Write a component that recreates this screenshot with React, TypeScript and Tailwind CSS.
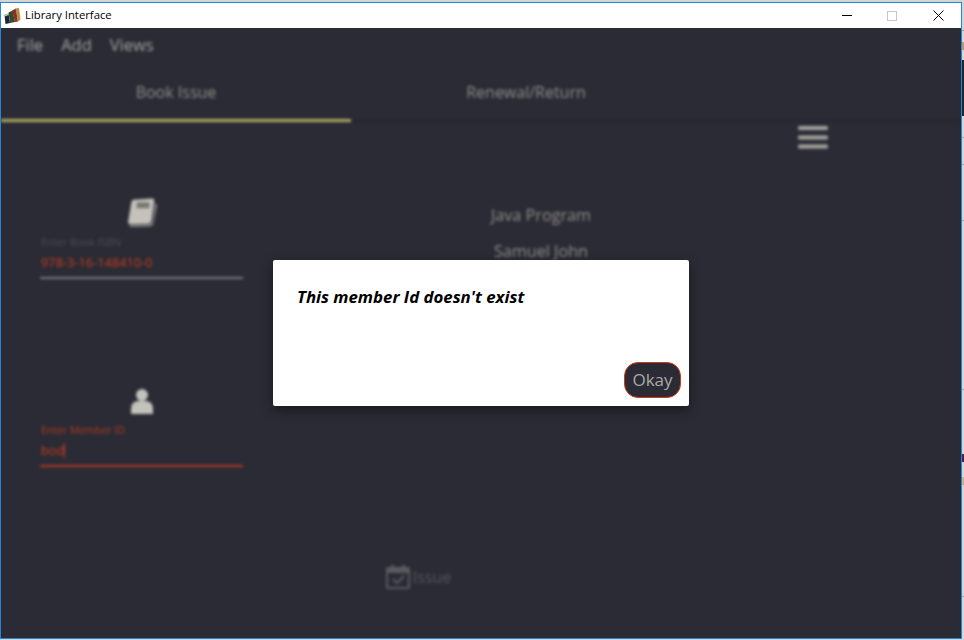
const sans = "font-['Open_Sans','Noto_Sans',sans-serif]";

function BooksLogo() {
  return (
    <svg width="17" height="18" viewBox="0 0 17 17">
      <path d="M0.500 7.500 L4.500 6 L6 15.500 L1.500 16.500 Z" fill="#1d2036" />
      <path d="M0.500 7.500 L4.500 6 L4.800 7.500 L0.800 9 Z" fill="#c9c4b0" />
      <path d="M4.500 5 L8.500 3 L11 14.500 L6 15.500 Z" fill="#2f4f2c" />
      <path d="M8 3 L12 1 L14 14 L11 14.500 Z" fill="#8e3124" />
      <path d="M11.500 1 L15 0.500 L16.500 12 L14 14 Z" fill="#b98a4a" />
    </svg>
  );
}

function BookIcon() {
  return (
    <svg width="32" height="32" viewBox="0 0 30 30">
      <path d="M7 2.500 L24 1.500 Q27 1.500 26.500 4 L24 22 Q23.500 25 21 25 L4.500 25.500 Q1.500 25.500 2 23 L5 5 Q5.300 2.600 7 2.500 Z" fill="#c4c2bb" />
      <path d="M27.500 6 L29 7 L26 24 Q25 27.500 22 27.500 L5 28 Q2.500 27.500 3 26.500 L22 26 Q25 25.500 25.500 22 Z" fill="#a5a39d" />
      <rect x="10" y="5" width="12" height="5.500" fill="#77766f" />
    </svg>
  );
}

function PersonIcon() {
  return (
    <svg width="24" height="27" viewBox="0 0 24 26">
      <circle cx="12" cy="6.500" r="6" fill="#c4c3bb" />
      <path d="M1 25.500 V20 Q1 13 8 12.500 H16 Q23 13 23 20 V25.500 Z" fill="#c4c3bb" />
    </svg>
  );
}

function HamburgerIcon() {
  return (
    <svg width="30" height="24" viewBox="0 0 30 24">
      <rect x="0" y="1" width="30" height="4" rx="1.500" fill="#a8a6a2" />
      <rect x="0" y="10.500" width="30" height="4" rx="1.500" fill="#a8a6a2" />
      <rect x="0" y="19.500" width="30" height="4" rx="1.500" fill="#a8a6a2" />
    </svg>
  );
}

function IssueIcon() {
  return (
    <svg width="24" height="25" viewBox="0 0 24 25">
      <path d="M1 5 H23 V9 H1 Z" fill="#5a5a61" />
      <rect x="1" y="4" width="22" height="20" rx="1" fill="none" stroke="#5a5a61" strokeWidth="2" />
      <rect x="5" y="1" width="3" height="5" fill="#5a5a61" />
      <rect x="16" y="1" width="3" height="5" fill="#5a5a61" />
      <path d="M7 15 L11 19 L18 12" fill="none" stroke="#5a5a61" strokeWidth="2.200" />
    </svg>
  );
}

function FloatingField({
  label,
  value,
  labelColor,
  lineClass,
  caret,
}: {
  label: string;
  value: string;
  labelColor: string;
  lineClass: string;
  caret?: boolean;
}) {
  return (
    <div className="w-[203px] pl-px">
      <div className={`text-[10.5px] leading-[12px] ${labelColor}`}>{label}</div>
      <div className="mt-[6px] flex h-[17px] items-center text-[12.8px] leading-[17px] text-[#c43e1e]">
        {value}
        {caret && <span className="h-[15px] w-px bg-[#c43e1e]" />}
      </div>
      <div className={`-ml-px mt-[6px] ${lineClass}`} />
    </div>
  );
}

export default function App() {
  return (
    <div className={`relative h-[640px] w-[964px] overflow-hidden bg-[#d3d5d7] pt-[2px] ${sans}`}>
      {/* Window */}
      <div className="flex h-[637px] w-[962px] flex-col border border-[#2585d6]">
        <div className="flex h-[25px] shrink-0 items-center bg-white pl-[3px] text-[11.3px] text-black">
          <BooksLogo />
          <span className="ml-[4px]">Library Interface</span>
          <div className="ml-auto flex items-center">
            <div className="h-px w-[10px] bg-black" />
            <div className="ml-[35px] h-[10px] w-[10px] border border-[#c8c8c8]" />
            <svg className="ml-[36px] mr-[17px]" width="11" height="11" viewBox="0 0 11 11">
              <path d="M0.500 0.500 L10.500 10.500 M10.500 0.500 L0.500 10.500" stroke="#000" strokeWidth="1" />
            </svg>
          </div>
        </div>

        {/* Blurred app behind the dialog */}
        <div className="flex min-h-0 flex-1 flex-col overflow-hidden bg-[#2b2b35]">
          <div className="flex min-h-0 flex-1 flex-col blur-[1.4px]">
            <div className="flex h-[34px] shrink-0 items-center gap-[18px] pl-[16px] text-[16.5px] text-[#a3a29e]">
              <span>File</span>
              <span>Add</span>
              <span>Views</span>
            </div>

            <div className="flex h-[60px] shrink-0 border-b-2 border-[#25252d] text-[16px] text-[#8f8e8a]">
              <div className="-mb-[2px] flex w-[350px] items-center justify-center border-b-[3px] border-[#b3ad62] pt-[2px]">
                Book Issue
              </div>
              <div className="flex w-[350px] items-center justify-center pt-[2px]">Renewal/Return</div>
            </div>

            <div className="flex h-[30px] shrink-0 justify-end pr-[133px] pt-[3px]">
              <HamburgerIcon />
            </div>

            <div className="flex shrink-0 pl-[39px] pt-[45px]">
              <div className="flex w-[203px] flex-col">
                <div className="flex justify-center">
                  <BookIcon />
                </div>
                <div className="mt-[7px]">
                  <FloatingField
                    label="Enter Book ISBN"
                    value="978-3-16-148410-0"
                    labelColor="text-[#4b4b52]"
                    lineClass="h-[2px] bg-[#7b7b80]"
                  />
                </div>
                <div className="mt-[109px] flex justify-center">
                  <PersonIcon />
                </div>
                <div className="mt-[9px]">
                  <FloatingField
                    label="Enter Member ID"
                    value="bod"
                    labelColor="text-[#b03a1e]"
                    lineClass="h-[2px] bg-[#b03a1e]"
                    caret
                  />
                </div>
              </div>
              <div className="ml-[55px] flex w-[486px] flex-col items-center gap-[12px] pt-[6px] text-[16.2px] leading-[24px] text-[#8f8e8a]">
                <span>Java Program</span>
                <span>Samuel John</span>
              </div>
            </div>

            <div className="flex justify-center pr-[125px] pt-[97px]">
              <div className="flex items-center gap-[3px] text-[16px] text-[#55555c]">
                <IssueIcon />
                <span>Issue</span>
              </div>
            </div>
          </div>
        </div>
      </div>

      {/* Desktop peeking through at the right edge */}
      <div className="absolute right-0 top-[30px] h-px w-[2px] bg-[#9a9a9a]" />
      <div className="absolute right-0 top-[42px] h-[8px] w-[2px] bg-[#b89a6a]" />
      <div className="absolute right-0 top-[60px] h-[56px] w-[2px] bg-[#1f2730]" />
      <div className="absolute right-0 top-[137px] h-px w-[2px] bg-[#a8a8a8]" />
      <div className="absolute right-0 top-[164px] h-px w-[2px] bg-[#a8a8a8]" />
      <div className="absolute right-0 top-[220px] h-px w-[2px] bg-[#a8a8a8]" />
      <div className="absolute right-0 top-[389px] h-px w-[2px] bg-[#a8a8a8]" />
      <div className="absolute right-0 top-[454px] h-[8px] w-[2px] bg-[#4a2448]" />
      <div className="absolute right-0 top-[477px] h-[8px] w-[2px] bg-[#c9b48a]" />
      <div className="absolute right-0 top-[596px] h-px w-[2px] bg-[#a8a8a8]" />

      {/* Dialog */}
      <div className="absolute left-[273px] top-[260px] flex h-[146px] w-[416px] flex-col rounded-[2px] bg-white shadow-[0_4px_12px_rgba(0,0,0,0.45)]">
        <div className="pl-[24px] pt-[24px] text-[16.8px] font-bold italic leading-[26px] text-black">
          This member Id doesn't exist
        </div>
        <button className="mb-[8px] mr-[8px] mt-auto flex h-[36px] w-[57px] items-center justify-center self-end rounded-[14px] border border-[#d03a15] bg-[#2b2b35] text-[17px] text-[#aaa9a4]">
          Okay
        </button>
      </div>
    </div>
  );
}
